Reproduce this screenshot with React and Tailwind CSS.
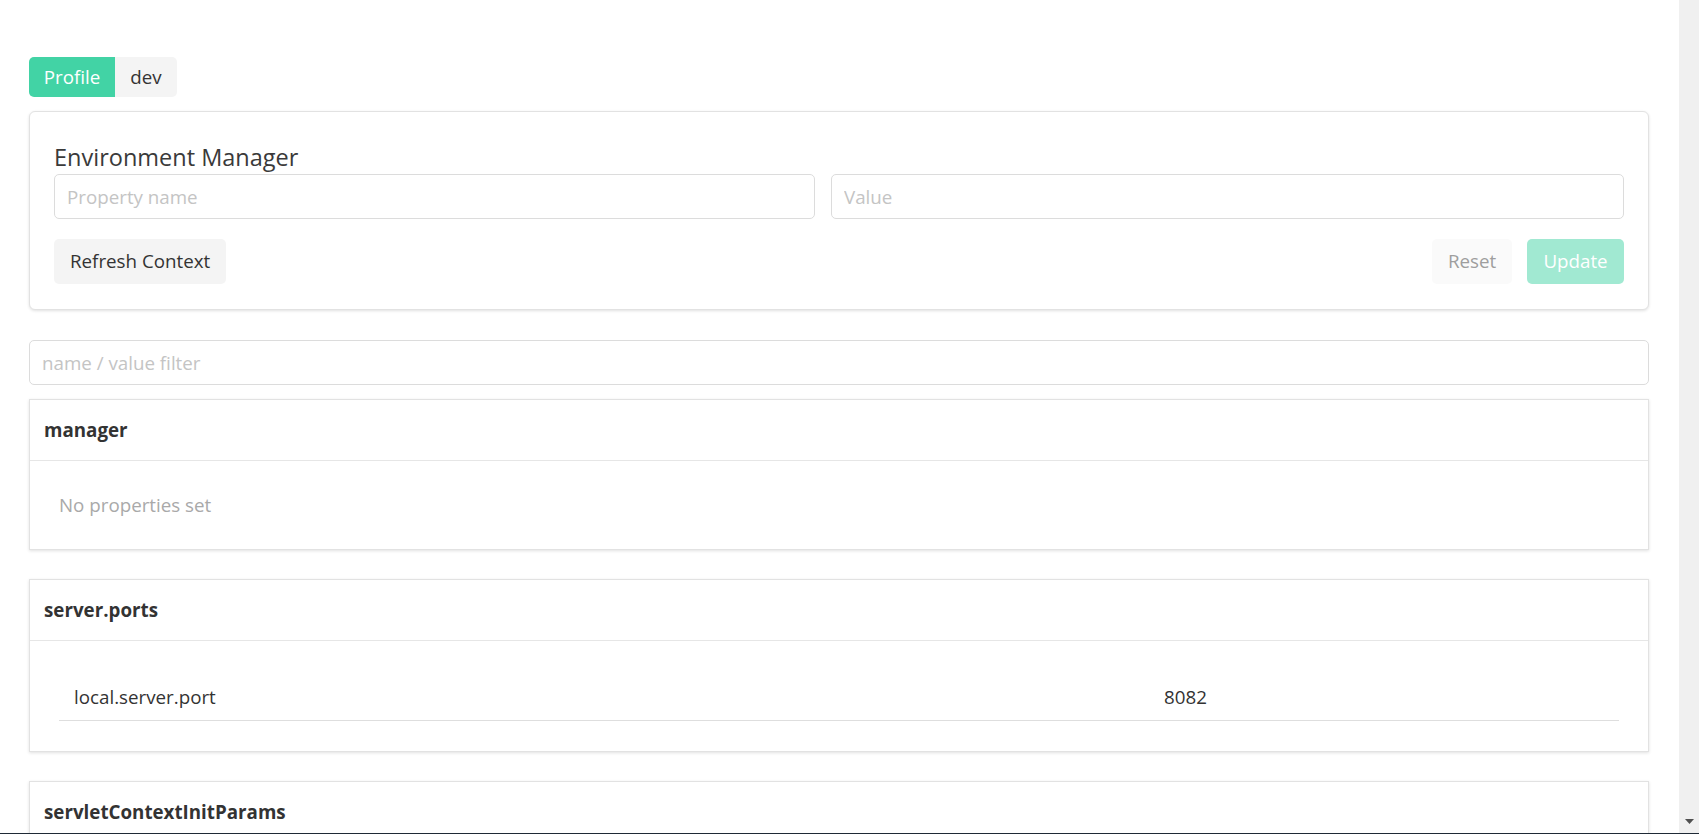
export default function App() {
  return (
    <div className="relative flex h-[834px] w-full overflow-hidden bg-white font-['Open_Sans',sans-serif] text-[18.75px] text-[#333]">
      <div className="min-w-0 flex-1 pl-[29px] pr-[30px] pt-[57px]">
        {/* tabs */}
        <div className="flex h-[40px]">
          <div className="flex w-[86px] items-center justify-center rounded-l-[5px] bg-[#42d3a5] text-white">Profile</div>
          <div className="flex w-[62px] items-center justify-center rounded-r-[5px] bg-[#f4f4f4] text-[#333]">dev</div>
        </div>

        {/* environment manager card */}
        <div className="mt-[14px] rounded-[6px] border border-[#e2e2e2] bg-white px-[24px] pb-[25px] pt-[29px] shadow-[0_1px_3px_rgba(0,0,0,0.12)]">
          <div className="text-[23.5px] leading-[33px] text-[#3a3a3a]">Environment Manager</div>
          <div className="flex gap-[16px]">
            <input
              className="h-[45px] w-[761px] rounded-[5px] border border-[#dcdcdc] px-[12px] text-[18.75px] outline-none placeholder:text-[#c4c4c4]"
              placeholder="Property name"
            />
            <input
              className="h-[45px] min-w-0 flex-1 rounded-[5px] border border-[#dcdcdc] px-[12px] text-[18.75px] outline-none placeholder:text-[#c4c4c4]"
              placeholder="Value"
            />
          </div>
          <div className="mt-[20px] flex items-center">
            <div className="flex h-[45px] items-center rounded-[5px] bg-[#f4f4f4] px-[16px] text-[#333]">Refresh Context</div>
            <div className="flex-1" />
            <div className="flex h-[45px] w-[80px] items-center justify-center rounded-[5px] bg-[#fafafa] text-[#9e9e9e]">Reset</div>
            <div className="ml-[15px] flex h-[45px] w-[97px] items-center justify-center rounded-[5px] bg-[#a1e9d2] text-white">Update</div>
          </div>
        </div>

        {/* filter */}
        <input
          className="mt-[30px] block h-[45px] w-full rounded-[5px] border border-[#dcdcdc] px-[12px] text-[18.75px] outline-none placeholder:text-[#c4c4c4]"
          placeholder="name / value filter"
        />

        {/* manager */}
        <div className="mt-[14px] border border-[#e2e2e2] bg-white shadow-[0_1px_3px_rgba(0,0,0,0.12)]">
          <div className="border-b border-[#e6e6e6] px-[14px] py-[15px] font-bold leading-[30px] text-[#333]">manager</div>
          <div className="px-[29px] py-[30px] leading-[28px] text-[#a9a9a9]">No properties set</div>
        </div>

        {/* server.ports */}
        <div className="mt-[29px] border border-[#e2e2e2] bg-white shadow-[0_1px_3px_rgba(0,0,0,0.12)]">
          <div className="border-b border-[#e6e6e6] px-[14px] py-[15px] font-bold leading-[30px] text-[#333]">server.ports</div>
          <div className="px-[29px] pb-[30px] pt-[29px]">
            <div className="flex border-b border-[#dedede] pb-[10px] pt-[14px] leading-[26px]">
              <div className="w-[1090px] pl-[15px]">local.server.port</div>
              <div className="flex-1 pl-[15px]">8082</div>
            </div>
          </div>
        </div>

        {/* servletContextInitParams */}
        <div className="mt-[29px] border border-[#e2e2e2] bg-white shadow-[0_1px_3px_rgba(0,0,0,0.12)]">
          <div className="border-b border-[#e6e6e6] px-[14px] py-[15px] font-bold leading-[30px] text-[#333]">servletContextInitParams</div>
          <div className="h-[200px]" />
        </div>
      </div>

      {/* scrollbar */}
      <div className="relative w-[20px] shrink-0 bg-[#f0f0f0]">
        <svg className="absolute bottom-[9px] left-[6px]" width="9" height="6" viewBox="0 0 9 6">
          <polygon points="0,0 9,0 4.5,5" fill="#505050" />
        </svg>
      </div>

      <div className="absolute bottom-0 left-0 h-px w-full bg-[#1f2a36]" />
    </div>
  );
}
